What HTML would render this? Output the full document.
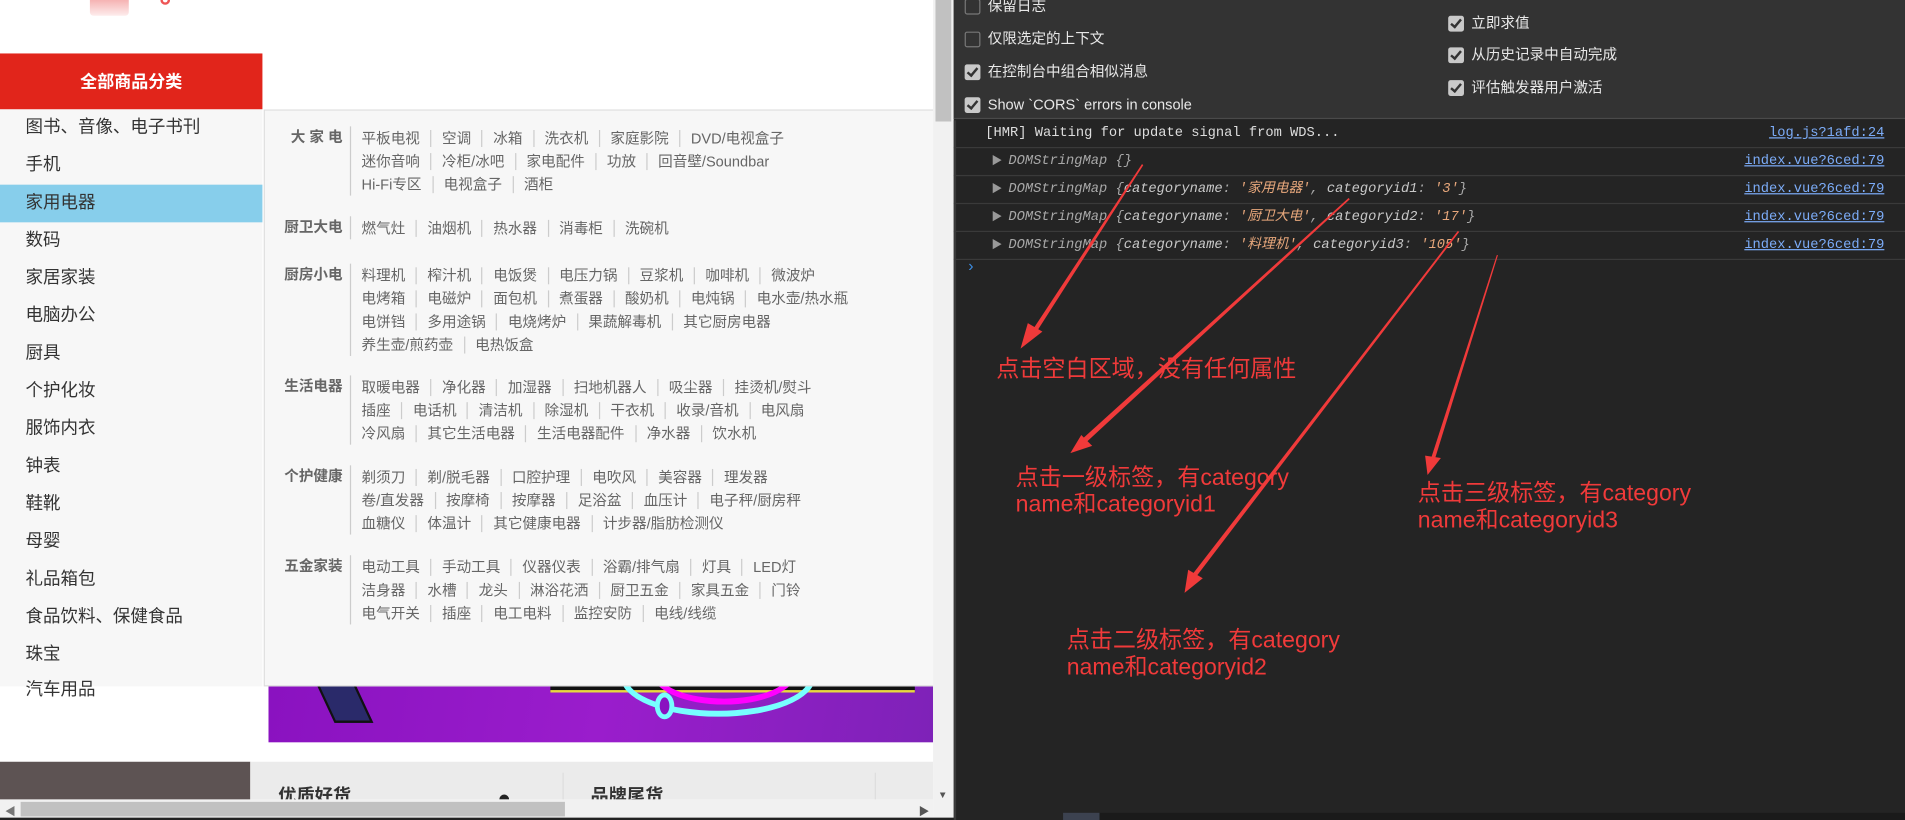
<!DOCTYPE html>
<html><head><meta charset="utf-8">
<style>
*{margin:0;padding:0;box-sizing:border-box}
html,body{width:1905px;height:820px;overflow:hidden;background:#fff}
#s{position:absolute;left:0;top:0;width:1568px;height:675px;transform:scale(1.21492);transform-origin:0 0;font-family:"Liberation Sans","Noto Sans CJK SC",sans-serif}
.abs{position:absolute}
#hdr{left:0;top:44px;width:216px;height:46px;background:#e1251b;color:#fff;font-weight:bold;font-size:14px;text-align:center;line-height:46px}
#list{left:0;top:90px;width:216px;height:475px;background:#f7f7f7}
.li{position:absolute;left:0;width:216px;height:31px;line-height:31px;padding-left:21px;font-size:14.4px;color:#333}
.li.on{background:#87ceeb}
#pop{left:217px;top:90px;width:560px;height:475px;background:#f7f7f7;border:1px solid #ddd}
#popclip{left:217px;top:90px;width:551px;height:476px;overflow:hidden}
.dl{position:absolute;left:0;width:560px}
.dt{position:absolute;left:0;width:70px;text-align:right;font-weight:bold;font-size:12px;color:#666;line-height:19px;padding-right:6px}
.dd{position:absolute;left:70px;width:480px;font-size:12px;color:#666;line-height:19px;border-left:1px solid #ccc}
.dd span{display:inline-block;padding:0 8.6px;border-left:1px solid #ccc;height:14px;line-height:14px;margin:2.5px 0;white-space:nowrap}
.dd span:first-child{border-left:0}
.dd div{white-space:nowrap;height:19px}
#dev{left:785px;top:0;width:783px;height:675px;background:#242424}
#set{left:0;top:0;width:783px;height:98px;background:#333;border-bottom:1px solid #4a4a4a}
.cb{position:absolute;font-size:12px;color:#e8e8e8;line-height:16px;padding-left:19px}
.cb i{position:absolute;left:0;top:2px;width:13px;height:13px;border-radius:2px;background:#c9c9c9}
.cb i.off{background:transparent;border:1px solid #777}
.cb i:not(.off)::after{content:"";position:absolute;left:4px;top:1px;width:3px;height:7px;border:solid #333;border-width:0 2px 2px 0;transform:rotate(40deg)}
.row{position:absolute;left:0;width:783px;height:23px;border-bottom:1px solid #3a3a3a;font-family:"Liberation Mono","Noto Sans CJK SC",monospace;font-size:11.3px;line-height:22px;color:#ddd}
.row .t{position:absolute;left:26px}
.row .o{position:absolute;left:31px;font-style:italic;color:#a8a8a8}
.row .o b{font-weight:normal;display:inline-block;margin-right:5px;font-style:normal;font-size:9px;color:#999}
.k{color:#c8c8c8}.st{color:#e8a87c}
.row a{position:absolute;right:17px;color:#7cacf8;text-decoration:underline}
.note{position:absolute;color:#f03a3a;font-size:19px;line-height:22px;font-family:"Liberation Sans","Noto Sans CJK SC",sans-serif;white-space:nowrap;letter-spacing:0}
</style></head><body><div id="s">
<div class="abs" style="left:74px;top:0;width:32px;height:13px;background:linear-gradient(#f3a0a0,#fde8e8);border-radius:0 0 3px 3px;opacity:.8"></div>
<div class="abs" style="left:132px;top:0;width:8px;height:4px;border:2px solid #e55;border-top:0;border-radius:0 0 5px 5px"></div>

<div id="hdr" class="abs">全部商品分类</div>
<div id="list" class="abs">
<div class="li" style="top:0">图书、音像、电子书刊</div>
<div class="li" style="top:31px">手机</div>
<div class="li on" style="top:62px">家用电器</div>
<div class="li" style="top:93px">数码</div>
<div class="li" style="top:124px">家居家装</div>
<div class="li" style="top:155px">电脑办公</div>
<div class="li" style="top:186px">厨具</div>
<div class="li" style="top:217px">个护化妆</div>
<div class="li" style="top:248px">服饰内衣</div>
<div class="li" style="top:279px">钟表</div>
<div class="li" style="top:310px">鞋靴</div>
<div class="li" style="top:341px">母婴</div>
<div class="li" style="top:372px">礼品箱包</div>
<div class="li" style="top:403px">食品饮料、保健食品</div>
<div class="li" style="top:434px">珠宝</div>
</div>
<div class="li abs" style="top:553px;background:none">汽车用品</div>

<div class="abs" style="left:221px;top:565px;width:547px;height:46px;background:linear-gradient(100deg,#8a12c0,#9a1dcc 50%,#7e22b8);overflow:hidden">
<div class="abs" style="left:45px;top:-10px;width:32px;height:40px;background:#2a2a6a;transform:skew(25deg);border:2px solid #111"></div>
<div class="abs" style="left:232px;top:0;width:300px;height:5px;background:#111;border-bottom:2px solid #e8d840"></div>
<div class="abs" style="left:290px;top:-40px;width:160px;height:65px;border:5px solid #7ff;border-radius:50%;border-top-color:transparent"></div>
<div class="abs" style="left:315px;top:-40px;width:120px;height:55px;border:5px solid #f0f;border-radius:50%;border-top-color:transparent"></div>
<div class="abs" style="left:318px;top:5px;width:16px;height:22px;border:4px solid #7ff;border-radius:50%;background:#8a12c0"></div>
</div>
<div class="abs" style="left:0;top:627px;width:206px;height:31px;background:#5d5353"></div>
<div class="abs" style="left:206px;top:627px;width:562px;height:31px;background:#ebebeb"></div>
<div class="abs" style="left:463px;top:636px;width:1px;height:22px;background:#ddd"></div>
<div class="abs" style="left:720px;top:636px;width:1px;height:22px;background:#ddd"></div>
<div class="abs" style="left:229px;top:646px;font-size:15px;font-weight:bold;color:#333;height:12px;overflow:hidden;line-height:20px">优质好货</div>
<div class="abs" style="left:486px;top:646px;font-size:15px;font-weight:bold;color:#333;height:12px;overflow:hidden;line-height:20px">品牌尾货</div>
<div class="abs" style="left:411px;top:654px;width:8px;height:4px;background:#222;border-radius:4px 4px 0 0"></div>

<div id="popclip" class="abs">
<div id="pop" class="abs" style="left:0;top:0">
<div class="dl" style="top:13px"><div class="dt">大 家 电</div><div class="dd">
<div><span>平板电视</span><span>空调</span><span>冰箱</span><span>洗衣机</span><span>家庭影院</span><span>DVD/电视盒子</span></div>
<div><span>迷你音响</span><span>冷柜/冰吧</span><span>家电配件</span><span>功放</span><span>回音壁/Soundbar</span></div>
<div><span>Hi-Fi专区</span><span>电视盒子</span><span>酒柜</span></div></div></div>
<div class="dl" style="top:87px"><div class="dt">厨卫大电</div><div class="dd">
<div><span>燃气灶</span><span>油烟机</span><span>热水器</span><span>消毒柜</span><span>洗碗机</span></div></div></div>
<div class="dl" style="top:126px"><div class="dt">厨房小电</div><div class="dd">
<div><span>料理机</span><span>榨汁机</span><span>电饭煲</span><span>电压力锅</span><span>豆浆机</span><span>咖啡机</span><span>微波炉</span></div>
<div><span>电烤箱</span><span>电磁炉</span><span>面包机</span><span>煮蛋器</span><span>酸奶机</span><span>电炖锅</span><span>电水壶/热水瓶</span></div>
<div><span>电饼铛</span><span>多用途锅</span><span>电烧烤炉</span><span>果蔬解毒机</span><span>其它厨房电器</span></div>
<div><span>养生壶/煎药壶</span><span>电热饭盒</span></div></div></div>
<div class="dl" style="top:218px"><div class="dt">生活电器</div><div class="dd">
<div><span>取暖电器</span><span>净化器</span><span>加湿器</span><span>扫地机器人</span><span>吸尘器</span><span>挂烫机/熨斗</span></div>
<div><span>插座</span><span>电话机</span><span>清洁机</span><span>除湿机</span><span>干衣机</span><span>收录/音机</span><span>电风扇</span></div>
<div><span>冷风扇</span><span>其它生活电器</span><span>生活电器配件</span><span>净水器</span><span>饮水机</span></div></div></div>
<div class="dl" style="top:292px"><div class="dt">个护健康</div><div class="dd">
<div><span>剃须刀</span><span>剃/脱毛器</span><span>口腔护理</span><span>电吹风</span><span>美容器</span><span>理发器</span></div>
<div><span>卷/直发器</span><span>按摩椅</span><span>按摩器</span><span>足浴盆</span><span>血压计</span><span>电子秤/厨房秤</span></div>
<div><span>血糖仪</span><span>体温计</span><span>其它健康电器</span><span>计步器/脂肪检测仪</span></div></div></div>
<div class="dl" style="top:366px"><div class="dt">五金家装</div><div class="dd">
<div><span>电动工具</span><span>手动工具</span><span>仪器仪表</span><span>浴霸/排气扇</span><span>灯具</span><span>LED灯</span></div>
<div><span>洁身器</span><span>水槽</span><span>龙头</span><span>淋浴花洒</span><span>厨卫五金</span><span>家具五金</span><span>门铃</span></div>
<div><span>电气开关</span><span>插座</span><span>电工电料</span><span>监控安防</span><span>电线/线缆</span></div></div></div>
</div></div>

<div class="abs" style="left:0;top:658px;width:768px;height:17px;background:#f1f1f1"></div>
<div class="abs" style="left:17px;top:660px;width:448px;height:12px;background:#c1c1c1"></div>
<div class="abs" style="left:4px;top:661px;font-size:9px;color:#777">◀</div>
<div class="abs" style="left:756px;top:661px;font-size:9px;color:#555">▶</div>
<div class="abs" style="left:768px;top:0;width:17px;height:675px;background:#f1f1f1"></div>
<div class="abs" style="left:770px;top:0;width:13px;height:100px;background:#c1c1c1"></div>
<div class="abs" style="left:772px;top:650px;font-size:8px;color:#555">▼</div>
<div class="abs" style="left:0;top:673px;width:1568px;height:2px;background:#222"></div>

<div id="dev" class="abs">
<div id="set" class="abs">
<div class="cb" style="left:9px;top:-3px"><i class="off"></i>保留日志</div>
<div class="cb" style="left:9px;top:24px"><i class="off"></i>仅限选定的上下文</div>
<div class="cb" style="left:9px;top:51px"><i></i>在控制台中组合相似消息</div>
<div class="cb" style="left:9px;top:78px"><i></i>Show `CORS` errors in console</div>
<div class="cb" style="left:407px;top:11px"><i></i>立即求值</div>
<div class="cb" style="left:407px;top:37px"><i></i>从历史记录中自动完成</div>
<div class="cb" style="left:407px;top:64px"><i></i>评估触发器用户激活</div>
</div>
<div class="abs" style="left:0;top:99px;width:2px;height:576px;background:#3a3a3a"></div>
<div class="row" style="top:99px"><span class="t">[HMR] Waiting for update signal from WDS...</span><a>log.js?1afd:24</a></div>
<div class="row" style="top:122px"><span class="o"><b>▶</b>DOMStringMap {}</span><a>index.vue?6ced:79</a></div>
<div class="row" style="top:145px"><span class="o"><b>▶</b>DOMStringMap {<span class="k">categoryname</span>: <span class="st">'家用电器'</span>, <span class="k">categoryid1</span>: <span class="st">'3'</span>}</span><a>index.vue?6ced:79</a></div>
<div class="row" style="top:168px"><span class="o"><b>▶</b>DOMStringMap {<span class="k">categoryname</span>: <span class="st">'厨卫大电'</span>, <span class="k">categoryid2</span>: <span class="st">'17'</span>}</span><a>index.vue?6ced:79</a></div>
<div class="row" style="top:191px"><span class="o"><b>▶</b>DOMStringMap {<span class="k">categoryname</span>: <span class="st">'料理机'</span>, <span class="k">categoryid3</span>: <span class="st">'105'</span>}</span><a>index.vue?6ced:79</a></div>
<div class="abs" style="left:12px;top:211px;color:#3d8fe6;font-size:13px">›</div>
<div class="abs" style="left:90px;top:669px;width:693px;height:6px;background:#1a1a1a"></div>
<div class="abs" style="left:90px;top:669px;width:30px;height:6px;background:#3c4250"></div>
</div>

<svg class="abs" style="left:0;top:0" width="1568" height="675">
<g fill="#f03a3a">
<polygon points="940,135 941,136 852,275 849,273"/><polygon points="840,287 846,266 858,273"/>
<polygon points="1110,163 1111,164 892,366 889,363"/><polygon points="881,373 890,358 899,367"/>
<polygon points="1200,190 1201,191 982,478 979,476"/><polygon points="975,488 978,469 990,476"/>
<polygon points="1232,210 1233,210 1181,378 1178,377"/><polygon points="1175,391 1173,375 1186,377"/>
</g>
</svg>
<div class="note" style="left:820px;top:294px">点击空白区域，没有任何属性</div>
<div class="note" style="left:836px;top:383px">点击一级标签，有category<br>name和categoryid1</div>
<div class="note" style="left:1167px;top:396px">点击三级标签，有category<br>name和categoryid3</div>
<div class="note" style="left:878px;top:517px">点击二级标签，有category<br>name和categoryid2</div>
</div></body></html>
